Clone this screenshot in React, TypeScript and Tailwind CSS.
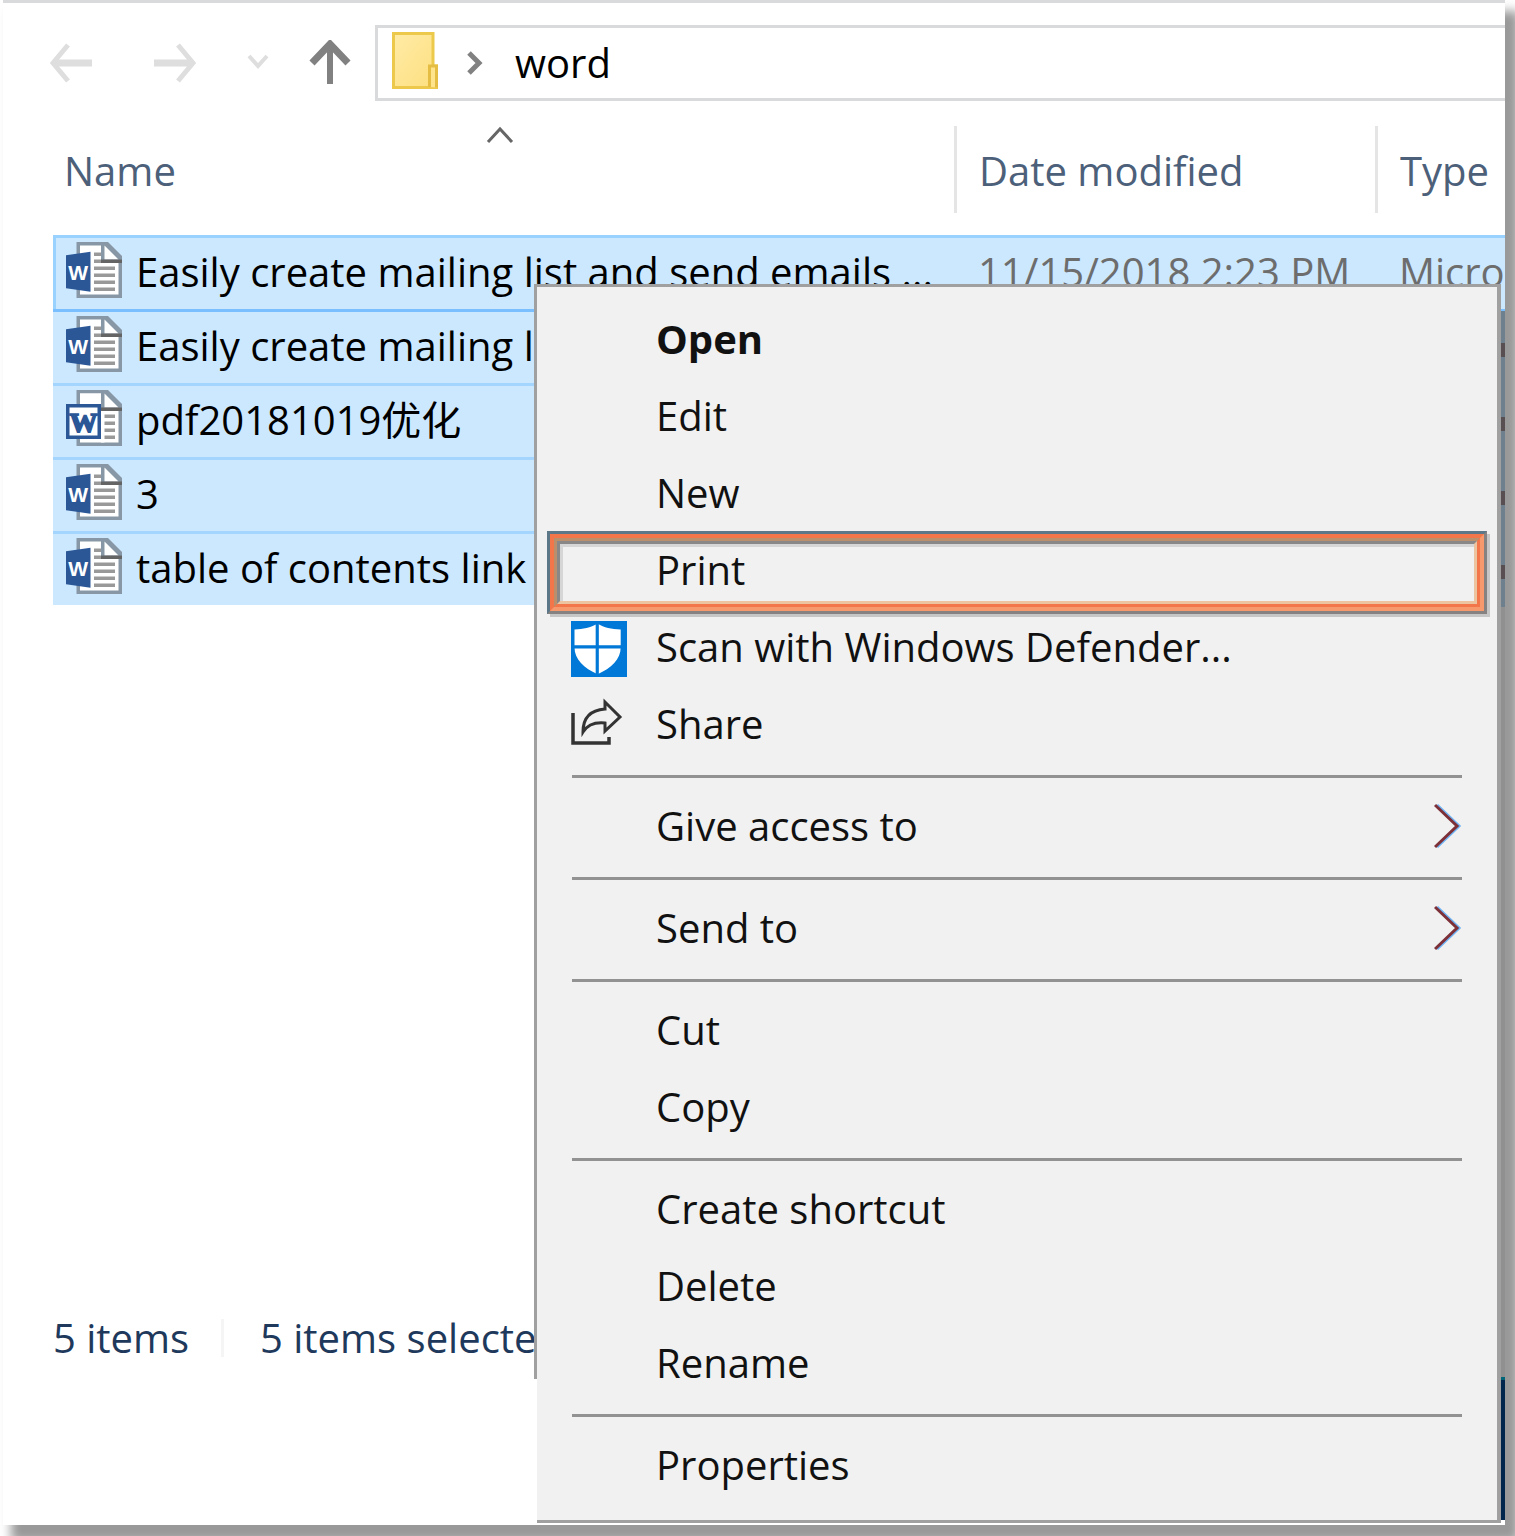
import React from "react";

type FileRow = { name: string; date: string; type: string; variant: "new" | "old"; line: string };

const files: FileRow[] = [
  { name: "Easily create mailing list and send emails ...", date: "11/15/2018 2:23 PM", type: "Micro", variant: "new", line: "border-t-[#99d1ff]" },
  { name: "Easily create mailing list", date: "", type: "", variant: "new", line: "border-t-[#7abfff]" },
  { name: "pdf20181019优化", date: "", type: "", variant: "old", line: "border-t-[#a3d5ff]" },
  { name: "3", date: "", type: "", variant: "new", line: "border-t-[#a3d5ff]" },
  { name: "table of contents link", date: "", type: "", variant: "new", line: "border-t-[#a3d5ff]" },
];

function WordIcon({ variant }: { variant: "new" | "old" }) {
  return (
    <svg viewBox="0 0 16 16" className="mb-1 size-14 shrink-0" aria-hidden="true">
      <path d="M3 0H12L16 4V16H3Z" fill="#8797a6" />
      <path d="M4 1H10V5.5H15V15H4Z" fill="#fff" />
      <path d="M11 1L15 5H11Z" fill="#fff" />
      <path d="M10 5H16V6H10Z" fill="#646464" />
      <path d="M8 3H10V4H8ZM8 5H10V6H8ZM8 7H14V8H8ZM8 9H14V10H8ZM8 11H14V12H8ZM8 13H14V14H8Z" fill="#999" />
      {variant === "new" ? (
        <>
          <path d="M0 3.8L7 2.8V14.2L0 13.2Z" fill="#2b5797" />
          <text x="3.5" y="10.8" textAnchor="middle" fontSize="6" fontWeight="700" fontFamily="Liberation Sans, sans-serif" fill="#fff">W</text>
        </>
      ) : (
        <>
          <path d="M4 1H10V4H4ZM10 6H11V15H10Z" fill="#fff" />
          <path d="M0 4H10V14H0Z" fill="#2b5797" />
          <path d="M1 5H9V13H1Z" fill="#fff" />
          <text x="5" y="12.1" textAnchor="middle" fontSize="8" fontWeight="700" fontFamily="Liberation Serif, serif" fill="#2b5797" stroke="#2b5797" strokeWidth="0.5">W</text>
        </>
      )}
    </svg>
  );
}

function Shield() {
  return (
    <svg viewBox="0 0 16 16" className="size-14" aria-hidden="true">
      <path d="M0 0H16V16H0Z" fill="#0078d7" />
      <path d="M1 2.4C3.500 2.400 5.500 1.900 7.600 0.800C9.500 1.900 11.500 2.400 14.200 2.400V7.500C14.200 11 11.500 13.500 7.600 15.200C3.700 13.500 1 11 1 7.500Z" fill="#fff" />
      <path d="M7.500 0V16M0 7.400H16" stroke="#0078d7" strokeWidth="0.900" fill="none" />
    </svg>
  );
}

function ShareIcon() {
  return (
    <svg viewBox="0 0 56 56" className="size-14" aria-hidden="true" fill="none" stroke="#333" strokeWidth="3">
      <path d="M2 15V45H38V39" strokeWidth="3.500" />
      <path d="M12 34C12 19 20 12 34 11V4L49 19L34 33V25C24 24 17 26 12 34Z" />
    </svg>
  );
}

function Separator() {
  return (
    <div role="separator" className="mx-[35px] py-[11px]">
      <div className="h-[3px] bg-[#929292]" />
    </div>
  );
}

function Highlight() {
  return (
    <span aria-hidden="true" className="pointer-events-none absolute inset-x-[10px] -top-[2px] -bottom-[4px] flex border-[3px] border-t-[#5c7888] border-l-[#5c7888] border-r-[#868282] border-b-[#868282] shadow-[3px_3px_0_#c6c6c6]">
      <span className="flex flex-1 border-4 border-t-[#f2764a] border-l-[#f2764a] border-r-[#f6996c] border-b-[#f6996c]">
        <span className="flex flex-1 border-[3px] border-t-[#b98f6c] border-l-[#b98f6c] border-r-[#f2764a] border-b-[#f2764a]">
          <span className="flex flex-1 border-[3px] border-t-[#8a8788] border-l-[#8a8788] border-r-[#ecc4a0] border-b-[#ecc4a0]">
            <span className="flex-1 border-t-[3px] border-l-[3px] border-[#d6d6d6]" />
          </span>
        </span>
      </span>
    </span>
  );
}

function MenuItem({ label, icon, bold, submenu, marked }: { label: string; icon?: React.ReactNode; bold?: boolean; submenu?: boolean; marked?: boolean }) {
  return (
    <button role="menuitem" className="relative flex h-[77px] w-full items-center pr-[35px] pl-[34px] text-left">
      {marked && <Highlight />}
      <span className="w-[85px] shrink-0">{icon}</span>
      <span className={bold ? "flex-1 pb-[3px] font-bold" : "flex-1 pb-[3px]"}>{label}</span>
      {submenu && (
        <svg viewBox="0 0 28 48" className="mb-[3px] h-12 w-7" aria-hidden="true" fill="none">
          <path d="M3 3L25 24L3 45" stroke="#6fb4f5" strokeWidth="3" />
          <path d="M1 3L23 24L1 45" stroke="#7d3038" strokeWidth="3" />
        </svg>
      )}
    </button>
  );
}

function ContextMenu() {
  return (
    <div role="menu" className="absolute top-[281px] right-[4px] left-[534px] border-y-[3px] border-r-[4px] border-[#a0a0a0] bg-[#f1f1f1] py-[15px] text-[#111]">
      <div aria-hidden="true" className="absolute -top-[3px] bottom-[141px] -left-[3px] w-[3px] bg-[#a0a0a0]" />
      <div aria-hidden="true" className="absolute top-[24px] -right-[8px] bottom-0 flex w-[4px] flex-col">
        <div className="flex h-[296px] flex-col gap-[60px] bg-[#6e7f8d] pt-[32px]">
          {files.slice(1).map((f) => (
            <div key={f.name} className="h-[14px] bg-[#574f52]" />
          ))}
        </div>
        <div className="flex-1 bg-[#909090]" />
        <div className="h-[3px] bg-[#006477]" />
        <div className="h-[140px] bg-[#00264d]" />
      </div>
      <MenuItem label="Open" bold />
      <MenuItem label="Edit" />
      <MenuItem label="New" />
      <MenuItem label="Print" marked />
      <MenuItem label="Scan with Windows Defender..." icon={<Shield />} />
      <MenuItem label="Share" icon={<ShareIcon />} />
      <Separator />
      <MenuItem label="Give access to" submenu />
      <Separator />
      <MenuItem label="Send to" submenu />
      <Separator />
      <MenuItem label="Cut" />
      <MenuItem label="Copy" />
      <Separator />
      <MenuItem label="Create shortcut" />
      <MenuItem label="Delete" />
      <MenuItem label="Rename" />
      <Separator />
      <MenuItem label="Properties" />
    </div>
  );
}

export default function App() {
  return (
    <div className="flex min-h-screen overflow-hidden bg-white pr-[10px] pb-[11px] pl-[3px] font-['Open_Sans','Noto_Sans_CJK_SC',sans-serif] text-[40px] leading-[52px] text-black">
      <main className="relative flex min-w-0 flex-1 flex-col border-t-[3px] border-[#d9dadb] bg-white shadow-[11px_14px_10px_3px_#999]">
        <div className="mt-[22px] flex h-[76px] items-center">
          <button aria-label="Back" className="ml-[47px]">
            <svg viewBox="0 0 42 42" className="size-[42px]" fill="none" stroke="#dedede">
              <path d="M3 21H42" strokeWidth="7" />
              <path d="M18 3L3 21L18 39" strokeWidth="5" />
            </svg>
          </button>
          <button aria-label="Forward" className="ml-[62px]">
            <svg viewBox="0 0 42 42" className="size-[42px]" fill="none" stroke="#dedede">
              <path d="M0 21H39" strokeWidth="7" />
              <path d="M24 3L39 21L24 39" strokeWidth="5" />
            </svg>
          </button>
          <button aria-label="Recent locations" className="ml-[51px]">
            <svg viewBox="0 0 22 18" className="h-[18px] w-[22px]" fill="none" stroke="#dedede">
              <path d="M2 2L11 12L20 2" strokeWidth="4" />
            </svg>
          </button>
          <button aria-label="Up" className="ml-[40px]">
            <svg viewBox="0 0 42 46" className="h-[46px] w-[42px]" fill="none" stroke="#818181">
              <path d="M21 4V44" strokeWidth="6" />
              <path d="M3 23L21 4L39 23" strokeWidth="7" />
            </svg>
          </button>
          <div className="ml-[24px] flex h-full flex-1 items-center border-y-[3px] border-l-[3px] border-[#d9dadb] pl-[14px]">
            <svg viewBox="0 0 46 57" className="mb-[6px] h-[57px] w-[46px]" aria-hidden="true">
              <defs>
                <linearGradient id="folder" x1="0" y1="0" x2="1" y2="1">
                  <stop offset="0" stopColor="#ffeba6" />
                  <stop offset="1" stopColor="#fddf7f" />
                </linearGradient>
              </defs>
              <path d="M1.500 1.500H41V34H44.500V55.500H1.500Z" fill="url(#folder)" stroke="#ecc94b" strokeWidth="3" />
              <path d="M37.500 55V34H44.500V55.500" fill="#ffe48c" stroke="#e5bd42" strokeWidth="3" />
            </svg>
            <svg viewBox="0 0 16 26" className="ml-[29px] h-[26px] w-4" aria-hidden="true" fill="none">
              <path d="M2 3L12 13L2 23" stroke="#818181" strokeWidth="5" />
            </svg>
            <button className="ml-[32px]">word</button>
          </div>
        </div>

        <div className="mt-[25px] overflow-hidden pl-[50px]">
          <table className="w-full table-fixed border-separate border-spacing-0 text-left">
            <colgroup>
              <col className="w-[901px]" />
              <col className="w-[421px]" />
              <col />
            </colgroup>
            <thead>
              <tr className="text-[#4c607a]">
                <th className="relative h-[109px] p-0 align-top font-normal">
                  <div className="flex h-[87px] items-center pt-[3px] pl-[11px]"><button>Name</button></div>
                  <svg viewBox="0 0 28 18" className="absolute top-0 left-[433px] h-[18px] w-7" aria-hidden="true" fill="none">
                    <path d="M2 16L14 3L26 16" stroke="#666" strokeWidth="3" />
                  </svg>
                </th>
                <th className="h-[109px] p-0 align-top font-normal">
                  <div className="flex h-[87px] items-center border-l-[3px] border-[#e5e5e5] pt-[3px] pl-[22px]"><button>Date modified</button></div>
                </th>
                <th className="h-[109px] p-0 align-top font-normal">
                  <div className="flex h-[87px] items-center border-l-[3px] border-[#e5e5e5] pt-[3px] pl-[22px]"><button>Type</button></div>
                </th>
              </tr>
            </thead>
            <tbody>
              {files.map((f, i) => (
                <tr key={i} className="bg-[#cce8ff]">
                  <td className={`h-[74px] border-t-[3px] p-0 whitespace-nowrap ${f.line} ${i === 0 ? "border-l-[3px] border-l-[#99d1ff] pl-[10px]" : "pl-[13px]"}`}>
                    <div className="flex items-center gap-[14px] pb-[3px]">
                      <WordIcon variant={f.variant} />
                      <span>{f.name}</span>
                    </div>
                  </td>
                  <td className={`h-[74px] border-t-[3px] p-0 pb-[3px] pl-[24px] whitespace-nowrap text-[#6d6d6d] ${f.line}`}>{f.date}</td>
                  <td className={`h-[74px] overflow-hidden border-t-[3px] p-0 pb-[3px] pl-[24px] whitespace-nowrap text-[#6d6d6d] ${f.line}`}>{f.type}</td>
                </tr>
              ))}
            </tbody>
          </table>
        </div>

        <footer className="mt-auto mb-[161px] flex items-center pl-[50px] text-[#1e395b]">
          <span className="w-[168px]">5 items</span>
          <span className="h-[38px] w-[3px] bg-[#f5f5f5]" />
          <span className="pl-[36px]">5 items selected</span>
        </footer>

        <ContextMenu />
      </main>
    </div>
  );
}
